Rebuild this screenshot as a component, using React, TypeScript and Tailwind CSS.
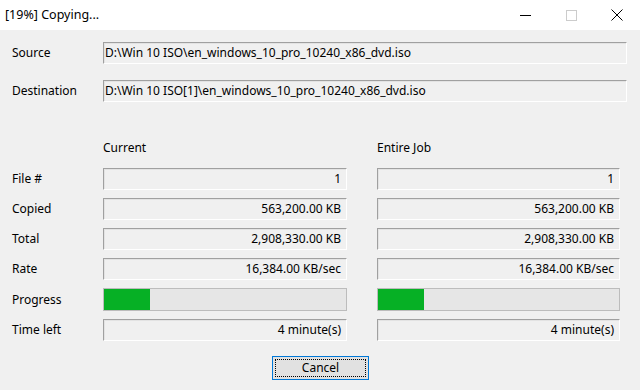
import React from "react";

type Row = {
    label: string
    current: string
    job: string
    progress?: number
}

const rows: Row[] = [
    { label: "File #", current: "1", job: "1" },
    { label: "Copied", current: "563,200.00 KB", job: "563,200.00 KB" },
    { label: "Total", current: "2,908,330.00 KB", job: "2,908,330.00 KB" },
    { label: "Rate", current: "16,384.00 KB/sec", job: "16,384.00 KB/sec" },
    { label: "Progress", current: "", job: "", progress: 19 },
    { label: "Time left", current: "4 minute(s)", job: "4 minute(s)" },
]

function Field({ text, width, align = "right" }: { text: string, width: string, align?: "left" | "right" }) {
    return (
        <div className={`${width} h-[22px] flex items-center border border-t-[#a0a0a0] border-l-[#a0a0a0] border-b-white border-r-white bg-[#f0f0f0] shadow-[inset_1px_1px_0_#e3e3e3] ${align === "right" ? "justify-end pr-[5px]" : "justify-start pl-[1px]"}`}>
            <span className="whitespace-nowrap">{text}</span>
        </div>
    )
}

function Progress({ width, value }: { width: string, value: number }) {
    return (
        <div className={`${width} h-[23px] border border-[#bcbcbc] bg-[#e6e6e6] p-0`}>
            <div className="h-full bg-[#06b025]" style={{ width: `${value}%` }} />
        </div>
    )
}

function App() {
    return (
        <div className="w-[640px] h-[390px] bg-[#f0f0f0] text-[12px] text-black overflow-hidden" style={{ fontFamily: "'Noto Sans', 'Open Sans', sans-serif" }}>
            <header className="h-[30px] bg-white flex items-center">
                <span className="pl-[5px] text-[12.5px] flex-1">[19%] Copying...</span>
                <div className="flex items-center h-full">
                    <div className="w-[46px] h-full flex items-center justify-center">
                        <div className="w-[11px] h-px bg-black" />
                    </div>
                    <div className="w-[46px] h-full flex items-center justify-center">
                        <div className="w-[11px] h-[11px] border border-[#cccccc]" />
                    </div>
                    <div className="w-[46px] h-full flex items-center justify-center">
                        <svg width="12" height="12" viewBox="0 0 12 12">
                            <path d="M0.5 0.5 L11.5 11.5 M11.5 0.5 L0.5 11.5" stroke="#000" strokeWidth="1" />
                        </svg>
                    </div>
                </div>
            </header>
            <main className="flex flex-col pl-[12px] pt-[12px]">
                <div className="flex items-center">
                    <span className="w-[91px]">Source</span>
                    <Field text="D:\Win 10 ISO\en_windows_10_pro_10240_x86_dvd.iso" width="w-[524px]" align="left" />
                </div>
                <div className="flex items-center mt-[16px]">
                    <span className="w-[91px]">Destination</span>
                    <Field text="D:\Win 10 ISO[1]\en_windows_10_pro_10240_x86_dvd.iso" width="w-[524px]" align="left" />
                </div>
                <div className="flex items-center mt-[38px] h-[16px]">
                    <span className="w-[91px]" />
                    <span className="w-[244px]">Current</span>
                    <span className="ml-[30px]">Entire Job</span>
                </div>
                <div className="flex flex-col gap-[8px] mt-[12px]">
                    {rows.map((r) => (
                        <div className="flex items-center" key={r.label}>
                            <span className="w-[91px]">{r.label}</span>
                            {r.progress !== undefined ? (
                                <>
                                    <Progress width="w-[244px]" value={r.progress} />
                                    <div className="ml-[30px]"><Progress width="w-[243px]" value={r.progress} /></div>
                                </>
                            ) : (
                                <>
                                    <Field text={r.current} width="w-[244px]" />
                                    <div className="ml-[30px]"><Field text={r.job} width="w-[243px]" /></div>
                                </>
                            )}
                        </div>
                    ))}
                </div>
                <div className="flex mt-[15px] pl-[260px]">
                    <button className="w-[97px] h-[24px] border border-[#0078d7] bg-[#e1e1e1] p-[2px]">
                        <div className="w-full h-full border border-dotted border-black flex items-center justify-center">Cancel</div>
                    </button>
                </div>
            </main>
        </div>
    )
}

export default App
